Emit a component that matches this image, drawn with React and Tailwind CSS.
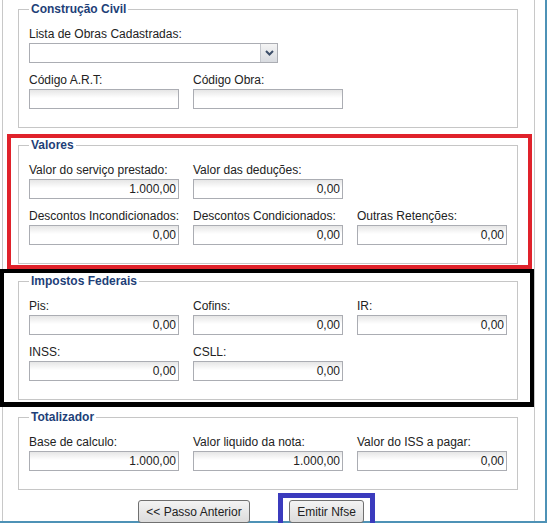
import React from 'react';

const Field = ({ label, value }) => (
    <div className="flex flex-col w-[150px]">
        <span className="text-[12px] leading-[14px] text-[#222] whitespace-nowrap mb-[2px]">{label}</span>
        <div className="h-[20px] border border-[#abadb3] bg-linear-to-b from-[#e6e6e6] to-white to-[45%] text-right pr-[2px] text-[12px] leading-[18px] text-[#222]">
            {value}
        </div>
    </div>
);

const Row = ({ children, top }) => <div className={`flex gap-[14px] ${top ? '' : 'mt-[10px]'}`}>{children}</div>;

const Box = ({ title, children, className = '' }) => (
    <fieldset className={`w-[500px] ml-[15px] border border-[#c6c6c6] ${className}`}>
        <legend className="ml-[10px] px-[2px] text-[12px] leading-[14px] font-bold text-[#1e3f78]">{title}</legend>
        <div className="pl-[10px] pt-[11px] pb-[18px]">{children}</div>
    </fieldset>
);

const Chevron = () => (
    <svg width="9" height="6" viewBox="0 0 9 6">
        <path d="M1 1 L4.5 4.5 L8 1" fill="none" stroke="#3d4f6a" strokeWidth="2" />
    </svg>
);

export default function App() {
    return (
        <div className="relative w-[547px] h-[523px] border-r-2 border-b-2 border-[#4e92b6] bg-white font-['Liberation_Sans',Arial,sans-serif]">
            <div className="ml-[2px] w-[533px] h-full border-x border-[#c8c8c8] pt-[2px]">
                <Box title="Construção Civil">
                    <span className="block text-[12px] leading-[14px] text-[#222] mb-[2px]">Lista de Obras Cadastradas:</span>
                    <div className="flex w-[249px] h-[20px] border border-[#abadb3] bg-white">
                        <div className="flex-1" />
                        <div className="w-[17px] h-full border-l border-[#c3c6cc] bg-linear-to-b from-[#f4f4f4] to-[#d8dbe0] flex items-center justify-center">
                            <Chevron />
                        </div>
                    </div>
                    <Row>
                        <Field label="Código A.R.T:" value="" />
                        <Field label="Código Obra:" value="" />
                    </Row>
                </Box>

                <Box title="Valores" className="mt-[10px]">
                    <Row top>
                        <Field label="Valor do serviço prestado:" value="1.000,00" />
                        <Field label="Valor das deduções:" value="0,00" />
                    </Row>
                    <Row>
                        <Field label="Descontos Incondicionados:" value="0,00" />
                        <Field label="Descontos Condicionados:" value="0,00" />
                        <Field label="Outras Retenções:" value="0,00" />
                    </Row>
                </Box>

                <Box title="Impostos Federais" className="mt-[10px]">
                    <Row top>
                        <Field label="Pis:" value="0,00" />
                        <Field label="Cofins:" value="0,00" />
                        <Field label="IR:" value="0,00" />
                    </Row>
                    <Row>
                        <Field label="INSS:" value="0,00" />
                        <Field label="CSLL:" value="0,00" />
                    </Row>
                </Box>

                <Box title="Totalizador" className="mt-[10px]">
                    <Row top>
                        <Field label="Base de calculo:" value="1.000,00" />
                        <Field label="Valor liquido da nota:" value="1.000,00" />
                        <Field label="Valor do ISS a pagar:" value="0,00" />
                    </Row>
                </Box>

                <div className="flex gap-[39px] pl-[135px] mt-[10px]">
                    <button className="relative w-[112px] h-[23px] rounded-[3px] border border-[#707070] bg-linear-to-b from-[#f3f3f3] to-[#dcdcdc] text-[12px] text-[#222]">
                        &lt;&lt; Passo Anterior
                    </button>
                    <button className="relative w-[75px] h-[23px] rounded-[3px] border border-[#707070] bg-linear-to-b from-[#f3f3f3] to-[#dcdcdc] text-[12px] text-[#222]">
                        Emitir Nfse
                    </button>
                </div>
            </div>

            <div className="absolute pointer-events-none left-[7px] top-[134px] w-[525px] h-[135px] border-4 border-[#e0222b]" />
            <div className="absolute pointer-events-none left-0 top-[269px] w-[534px] h-[138px] border-4 border-b-[5px] border-black" />
            <div className="absolute pointer-events-none left-[278px] top-[493px] w-[97px] h-[40px] border-[5px] border-[#3b3bbd]" />
        </div>
    );
}
